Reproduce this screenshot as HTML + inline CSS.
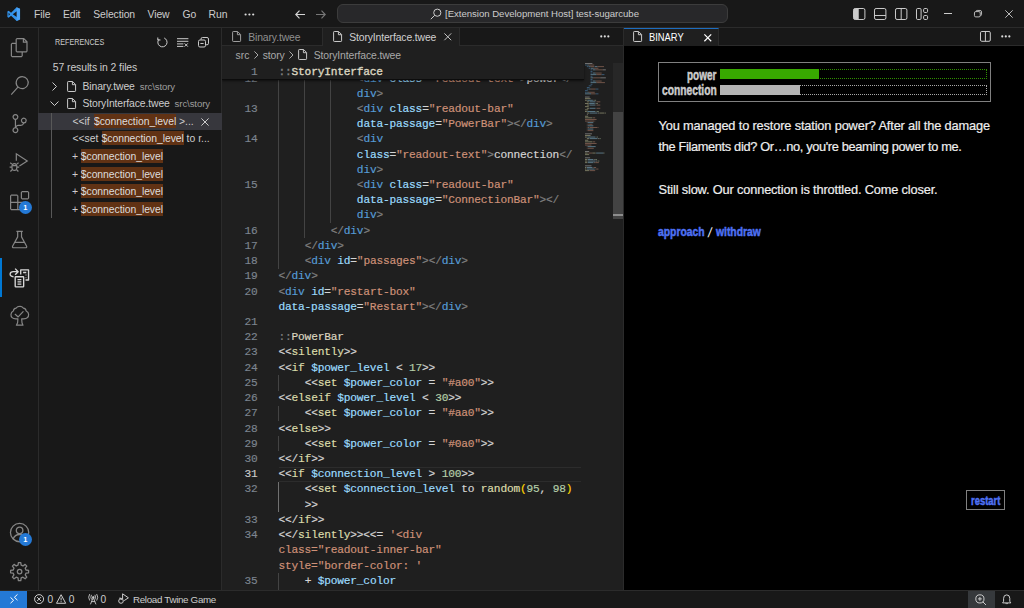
<!DOCTYPE html>
<html><head><meta charset="utf-8"><title>VS Code</title>
<style>
*{box-sizing:border-box;margin:0;padding:0}
html{background:#181818}
html,body{width:1024px;height:608px;overflow:hidden;background:#181818;font-family:"Liberation Sans",sans-serif;font-size:10.4px;color:#ccc}
.abs{position:absolute}
#title{position:absolute;left:0;top:0;width:1024px;height:28px;background:#181818;border-bottom:1px solid #2b2b2b}
#title .m{position:absolute;top:9px;letter-spacing:-.12px;margin-left:-.4px;font-size:10.4px;color:#ccc;line-height:12px;white-space:nowrap}
#cc{position:absolute;left:336.7px;top:4.3px;width:391.8px;height:19px;border:1px solid #3c3c3c;border-radius:6px;background:#28282a}
#cc span{letter-spacing:-.03px;position:absolute;left:107.4px;top:2.6px;font-size:9.6px;line-height:12px;color:#ccc;white-space:nowrap}
#act{position:absolute;left:0;top:28px;width:39px;height:562px;background:#181818;border-right:1px solid #2b2b2b}
#side{position:absolute;left:39px;top:28px;width:183px;height:562px;background:#181818;border-right:1px solid #2b2b2b}
#ed{position:absolute;left:222px;top:28px;width:402px;height:562px;background:#1f1f1f;overflow:hidden;border-right:1px solid #2b2b2b}
#pane{position:absolute;left:624px;top:28px;width:400px;height:562px;background:#000}
#status{position:absolute;left:0;top:590px;width:1024px;height:18px;background:#181818;border-top:1px solid #2b2b2b}
svg{position:absolute;overflow:visible}
.row{position:absolute;left:0;width:183px;height:17.6px;line-height:17.6px;white-space:nowrap;font-size:10.4px;color:#ccc}
.row span{position:absolute;top:0}
.hl{background:#613214;color:#ddd}
.dim{color:#9d9d9d;font-size:9.6px}
.tabs{position:absolute;left:0;top:0;height:17.6px;width:100%;background:#181818;border-bottom:1px solid #2b2b2b}
.tab{position:absolute;top:0;height:17.6px;border-right:1px solid #2b2b2b;font-size:10.4px;line-height:17px;white-space:nowrap}
.tab span{position:absolute;top:1px}
.code{position:absolute;left:0;margin-top:.5px;margin-left:-.7px;-webkit-text-stroke:.18px currentColor;font-family:"Liberation Mono",monospace;font-size:11.2px;letter-spacing:-.19px;line-height:15.22px;height:15.22px;white-space:pre;color:#d4d4d4}
.ln{position:absolute;left:0;margin-top:.5px;width:35.6px;text-align:right;font-family:"Liberation Mono",monospace;font-size:11.2px;letter-spacing:-.19px;line-height:15.22px;color:#7d8590;-webkit-text-stroke:.15px currentColor}
.cd{position:absolute;font-weight:bold;-webkit-text-stroke:.5px currentColor;white-space:nowrap;transform-origin:0 0;display:inline-block}
.pt{position:absolute;left:34.5px;font-size:12.8px;line-height:21.2px;color:#eee;white-space:nowrap;-webkit-text-stroke:.2px currentColor}
.sb{position:absolute;top:0;font-size:10.2px;line-height:17.5px;color:#ccc;white-space:nowrap}
.g{color:#808080}.b{color:#569cd6}.a{color:#9cdcfe}.s{color:#ce9178}.y{color:#dcdcaa}.n{color:#b5cea8}.p{color:#ffd700}.w{color:#d4d4d4}.t{color:#dcd6c0}
</style></head><body>
<div id="title">
<svg style="left:7.2px;top:6.6px" width="13.6" height="14.4" viewBox="0 0 100 100" preserveAspectRatio="none"><path fill="#3292ea" d="M71 2 L96 13 V87 L71 98 L30 60 L12 74 L3 69 V31 L12 26 L30 40 Z M72 30 L42 50 L72 70 Z M12 40 V60 L22 50 Z"/><path fill="#58adff" d="M71 2 L96 13 V87 L71 98 Z" opacity=".6"/></svg>
<span class="m" style="left:34.5px">File</span>
<span class="m" style="left:63.3px">Edit</span>
<span class="m" style="left:93.7px">Selection</span>
<span class="m" style="left:148px">View</span>
<span class="m" style="left:183px">Go</span>
<span class="m" style="left:209px">Run</span>
<svg style="left:243.8px;top:12.6px" width="10.8" height="3" viewBox="0 0 10 3"><circle cx="1.2" cy="1.5" r="1.1" fill="#ddd"/><circle cx="5" cy="1.5" r="1.1" fill="#ddd"/><circle cx="8.8" cy="1.5" r="1.1" fill="#ddd"/></svg>
<svg style="left:295px;top:9.5px" width="10" height="9" viewBox="0 0 10 9" fill="none" stroke="#d4d4d4" stroke-width="1.15"><path d="M4.5 .7 L.8 4.5 L4.5 8.3 M.8 4.5 H10"/></svg>
<svg style="left:316px;top:9.5px" width="10" height="9" viewBox="0 0 10 9" fill="none" stroke="#777" stroke-width="1.15"><path d="M5.5 .7 L9.2 4.5 L5.5 8.3 M9.2 4.5 H0"/></svg>
<div id="cc"><svg style="left:92.3px;top:3px" width="12" height="12" viewBox="0 0 12 12" fill="none" stroke="#ccc" stroke-width="1"><circle cx="7.3" cy="4.7" r="3.6"/><path d="M4.7 7.3 L.8 11.2"/></svg><span>[Extension Development Host] test-sugarcube</span></div>
<svg style="left:853px;top:7.5px" width="12.4" height="12" viewBox="0 0 12.4 12" fill="none" stroke="#ccc" stroke-width="1"><rect x=".5" y=".5" width="11.4" height="11" rx="1.6"/><path d="M1 1 H5.2 V11 H1 Z" fill="#ccc" stroke="none"/><path d="M5.2 .5 V11.5"/></svg>
<svg style="left:873.8px;top:7.5px" width="12.4" height="12" viewBox="0 0 12.4 12" fill="none" stroke="#ccc" stroke-width="1"><rect x=".5" y=".5" width="11.4" height="11" rx="1.6"/><path d="M.5 7.5 H11.9"/></svg>
<svg style="left:894.8px;top:7.5px" width="12.4" height="12" viewBox="0 0 12.4 12" fill="none" stroke="#ccc" stroke-width="1"><rect x=".5" y=".5" width="11.4" height="11" rx="1.6"/><path d="M6.2 .5 V11.5"/></svg>
<svg style="left:916px;top:7.5px" width="12.4" height="12" viewBox="0 0 12.4 12" fill="none" stroke="#ccc" stroke-width="1"><rect x=".5" y=".5" width="4.6" height="11" rx="1.2"/><rect x="7.6" y=".5" width="4" height="4" rx="1.2"/><rect x="7.6" y="7.5" width="4" height="4" rx="1.2"/></svg>
<svg style="left:944px;top:13px" width="8" height="1" viewBox="0 0 8 1"><rect width="8" height="1" fill="#ccc"/></svg>
<svg style="left:974px;top:10.3px" width="8" height="7.4" viewBox="0 0 8 7.4" fill="none" stroke="#ccc" stroke-width=".9"><rect x=".45" y="1.6" width="5.8" height="5.3" rx="1.3"/><path d="M2 1.4 Q2.2 .45 3.2 .45 H6 Q7.55 .45 7.55 2 V4.6 Q7.55 5.5 6.5 5.7"/></svg>
<svg style="left:1005px;top:9.8px" width="8" height="8" viewBox="0 0 8 8" fill="none" stroke="#ccc" stroke-width=".9"><path d="M.3 .3 L7.7 7.7 M7.7 .3 L.3 7.7"/></svg>
</div>
<div id="act">
<svg style="left:9.6px;top:9.6px" width="19.2" height="19.2" viewBox="0 0 24 24" fill="#868686"><path d="M17.5 0h-9L7 1.5V6H2.5L1 7.5v15.07L2.5 24h12.07L16 22.57V18h4.7l1.3-1.43V4.5L17.5 0zm0 2.12l2.38 2.38H17.5V2.12zm-3 20.38h-12v-15H7v9.07L8.5 18h6v4.5zm6-6h-12v-15H16V6h4.5v10.5z"/></svg>
<svg style="left:9.6px;top:48.0px" width="19.2" height="19.2" viewBox="0 0 24 24" fill="#868686"><path d="M15.25 0a8.25 8.25 0 0 0-6.18 13.72L1 22.88l1.12 1 8.05-9.12A8.251 8.251 0 1 0 15.25.01V0zm0 15a6.75 6.75 0 1 1 0-13.5 6.75 6.75 0 0 1 0 13.5z"/></svg>
<svg style="left:9.6px;top:86.4px" width="19.2" height="19.2" viewBox="0 0 24 24" fill="#868686"><path d="M21.007 8.222A3.738 3.738 0 0 0 15.045 5.2a3.737 3.737 0 0 0 1.156 6.583 2.988 2.988 0 0 1-2.668 1.67h-2.99a4.456 4.456 0 0 0-2.989 1.165V7.4a3.737 3.737 0 1 0-1.494 0v9.117a3.776 3.776 0 1 0 1.816.099 2.99 2.99 0 0 1 2.668-1.667h2.99a4.484 4.484 0 0 0 4.223-3.039 3.736 3.736 0 0 0 3.25-3.687zM4.565 3.738a2.242 2.242 0 1 1 4.484 0 2.242 2.242 0 0 1-4.484 0zm4.484 16.441a2.242 2.242 0 1 1-4.484 0 2.242 2.242 0 0 1 4.484 0zm8.221-9.715a2.242 2.242 0 1 1 0-4.485 2.242 2.242 0 0 1 0 4.485z"/></svg>
<svg style="left:9.6px;top:124.8px" width="19.2" height="19.2" viewBox="0 0 24 24" fill="#868686"><g fill="none" stroke="#868686" stroke-width="1.5"><path d="M7.9 9.6 V1 L21.6 10 L11.8 16.4"/><g transform="translate(-1.3 .7)"><ellipse cx="6.8" cy="16.8" rx="3.1" ry="4.3"/><path d="M3.8 13.2 L1.6 11.4 M9.8 13.2 L12 11.4 M3.6 17 H.8 M10 17 H12.8 M4 20.2 L1.8 22.4 M9.6 20.2 L11.8 22.4 M4 15 H9.6"/></g></g></svg>
<svg style="left:9.6px;top:163.2px" width="19.2" height="19.2" viewBox="0 0 24 24" fill="#868686"><path d="M13.5 1.5L15 0h7.5L24 1.5V9l-1.5 1.5H15L13.5 9V1.5zm1.5 0V9h7.5V1.5H15zM0 15V6l1.5-1.5H9L10.5 6v7.5H18l1.5 1.5v7.5L18 24H1.5L0 22.5V15zm9-1.5V6H1.5v7.5H9zM9 15H1.5v7.5H9V15zm1.5 7.5H18V15h-7.5v7.5z"/></svg>
<svg style="left:9.6px;top:201.6px" width="19.2" height="19.2" viewBox="0 0 24 24" fill="#868686"><g fill="none" stroke="#868686" stroke-width="1.5" stroke-linejoin="round"><path d="M8 1.8 H16 M9.6 1.8 V8.6 L3.2 20.4 Q2.6 22.2 4.6 22.2 H19.4 Q21.4 22.2 20.8 20.4 L14.4 8.6 V1.8 M6 15.4 H18"/></g></svg>
<svg style="left:9.6px;top:240.0px" width="19.2" height="19.2" viewBox="0 0 24 24" fill="#d7d7d7"><g fill="none" stroke="#d7d7d7" stroke-width="1.7" stroke-linejoin="round"><path d="M13.4 8 V2.4 H23.2 V15 H19.4 M16.4 5.6 H20.4 M19.6 8.8 H20.4 M19.6 12 H20.4"/><rect x="6.5" y="11" width="10.6" height="12.6" rx=".8" fill="#181818"/><path d="M9.4 14.6 H14.2 M9.4 17.4 H14.2 M9.4 20.2 H14.2"/><path d="M4.4 11 Q-.2 10.4 .2 7.4 Q.6 4.6 4 4.6 H9.4 M6.4 .8 L10.2 4.6 L6.4 8.4"/></g></svg>
<svg style="left:9.6px;top:278.4px" width="19.2" height="19.2" viewBox="0 0 24 24" fill="#868686"><g fill="none" stroke="#868686" stroke-width="1.5" stroke-linejoin="round" stroke-linecap="round"><path d="M9.9 16 H7.4 Q1 15.8 1.2 10.6 Q1.3 7.4 4.2 6.2 Q4.6 3 7.6 2.6 Q9.6 .4 12.2 .6 Q14.8 .4 16.8 2.6 Q19.8 3 20.2 6.2 Q23.2 7.4 23.3 10.6 Q23.4 15.8 17 16 H14.6 M9.9 16 L9.5 21 L8 24 H16.2 L15 21 L14.6 16"/><path d="M6.5 10.4 L10.2 13.7 L16.4 7.1"/></g></svg>
<div class="abs" style="left:18.8px;top:173.2px;width:13px;height:13px;border-radius:7px;background:#2479d6;color:#fff;font-size:7.4px;font-weight:bold;line-height:13px;text-align:center">1</div>
<div class="abs" style="left:0;top:230.4px;width:2px;height:38.4px;background:#0078d4"></div>
<svg style="left:9.6px;top:495.2px" width="19.2" height="19.2" viewBox="0 0 24 24" fill="none" stroke="#868686" stroke-width="1.5" transform="scale(1.08)"><circle cx="12" cy="12" r="10.6"/><circle cx="12" cy="9.4" r="3.8"/><path d="M4.6 19.4 Q6.4 14.2 12 14.2 Q17.6 14.2 19.4 19.4"/></svg>
<div class="abs" style="left:18.8px;top:505.2px;width:13px;height:13px;border-radius:7px;background:#2479d6;color:#fff;font-size:7.4px;font-weight:bold;line-height:13px;text-align:center">1</div>
<svg style="left:9.6px;top:533.6px" width="19.2" height="19.2" viewBox="0 0 24 24" fill="none" stroke="#868686" stroke-width="1.5" stroke-linejoin="round" transform="scale(1.08)"><path d="M19.38 10.17 L22.41 10.62 L22.41 13.38 L19.38 13.83 L18.51 15.92 L20.34 18.38 L18.38 20.34 L15.92 18.51 L13.83 19.38 L13.38 22.41 L10.62 22.41 L10.17 19.38 L8.08 18.51 L5.62 20.34 L3.66 18.38 L5.49 15.92 L4.62 13.83 L1.59 13.38 L1.59 10.62 L4.62 10.17 L5.49 8.08 L3.66 5.62 L5.62 3.66 L8.08 5.49 L10.17 4.62 L10.62 1.59 L13.38 1.59 L13.83 4.62 L15.92 5.49 L18.38 3.66 L20.34 5.62 L18.51 8.08 Z"/><circle cx="12" cy="12" r="2.6"/></svg>
</div>
<div id="side">
<span class="abs" style="left:15.7px;top:8px;font-size:9.4px;line-height:12px;color:#ccc;white-space:nowrap;transform:scaleX(.768);transform-origin:0 0">REFERENCES</span>
<svg style="left:117.6px;top:9px" width="10.6" height="10.6" viewBox="0 0 10.6 10.6" fill="none" stroke="#ccc" stroke-width="1"><path d="M7.2 1 A4.6 4.6 0 1 1 1.9 2.3 M.8 .5 V3 H3.5" /></svg>
<svg style="left:138px;top:10px" width="11.6" height="9" viewBox="0 0 11.6 9" fill="none" stroke="#ccc" stroke-width="1"><path d="M0 .7 H11.4 M0 3.3 H11.4 M0 5.9 H6.4 M0 8.4 H6.4 M7.6 5.4 L10.8 8.6 M10.8 5.4 L7.6 8.6"/></svg>
<svg style="left:159px;top:9px" width="11" height="10.6" viewBox="0 0 11 10.6" fill="none" stroke="#ccc" stroke-width="1"><rect x=".5" y="3" width="7" height="7" rx="1.4"/><path d="M2.4 6.5 H5.6 M3 2.8 V2 Q3 .5 4.5 .5 H9 Q10.5 .5 10.5 2 V6.4 Q10.5 7.8 9 7.8 H7.8"/></svg>
<div class="row" style="top:31.9px"><span style="left:13.8px;top:-1.3px;letter-spacing:-.08px">57 results in 2 files</span></div>
<div class="row" style="top:49.5px"><svg style="left:13px;top:4.3px" width="5" height="9" viewBox="0 0 5 9" fill="none" stroke="#ccc" stroke-width="1"><path d="M.5 .5 L4.5 4.5 L.5 8.5"/></svg><svg style="left:27.7px;top:3.3px" width="9.2" height="11" viewBox="0 0 9.2 11" fill="none" stroke="#ccc" stroke-width="1" stroke-linejoin="round"><path d="M.6 1.2 Q.6 .5 1.3 .5 H5.6 L8.6 3.5 V9.8 Q8.6 10.5 7.9 10.5 H1.3 Q.6 10.5 .6 9.8 Z M5.4 .7 V3.7 H8.4"/></svg><span style="left:43.5px;letter-spacing:-.12px">Binary.twee</span><span class="dim" style="left:100.7px;letter-spacing:-.1px">src\story</span></div>
<div class="row" style="top:67.1px"><svg style="left:11px;top:6.3px" width="9" height="5" viewBox="0 0 9 5" fill="none" stroke="#ccc" stroke-width="1"><path d="M.5 .5 L4.5 4.5 L8.5 .5"/></svg><svg style="left:27.7px;top:3.3px" width="9.2" height="11" viewBox="0 0 9.2 11" fill="none" stroke="#ccc" stroke-width="1" stroke-linejoin="round"><path d="M.6 1.2 Q.6 .5 1.3 .5 H5.6 L8.6 3.5 V9.8 Q8.6 10.5 7.9 10.5 H1.3 Q.6 10.5 .6 9.8 Z M5.4 .7 V3.7 H8.4"/></svg><span style="left:43.5px;letter-spacing:-.12px">StoryInterface.twee</span><span class="dim" style="left:135.6px;letter-spacing:-.1px">src\story</span></div>
<div class="row" style="top:84.7px;background:#37373d;box-shadow:-1px 0 0 #37373d"><span style="left:33.4px">&lt;&lt;if</span><span class="hl" style="left:55px;top:1px;height:14.2px;line-height:15.4px;letter-spacing:-.06px">$connection_level</span><span style="left:140px">&gt;...</span><svg style="left:161.5px;top:5px" width="8" height="8" viewBox="0 0 8 8" fill="none" stroke="#ccc" stroke-width="1"><path d="M.4 .4 L7.6 7.6 M7.6 .4 L.4 7.6"/></svg></div>
<div class="row" style="top:102.30000000000001px"><span style="left:33.4px">&lt;&lt;set</span><span class="hl" style="left:62.6px;top:1px;height:14.2px;line-height:15.4px;letter-spacing:-.06px">$connection_level</span><span style="left:147.6px">to r...</span></div>
<div class="row" style="top:119.9px"><span style="left:33px">+</span><span class="hl" style="left:41.8px;top:1px;height:14.2px;line-height:15.4px;letter-spacing:-.06px">$connection_level</span></div>
<div class="row" style="top:137.5px"><span style="left:33px">+</span><span class="hl" style="left:41.8px;top:1px;height:14.2px;line-height:15.4px;letter-spacing:-.06px">$connection_level</span></div>
<div class="row" style="top:155.10000000000002px"><span style="left:33px">+</span><span class="hl" style="left:41.8px;top:1px;height:14.2px;line-height:15.4px;letter-spacing:-.06px">$connection_level</span></div>
<div class="row" style="top:172.70000000000002px"><span style="left:33px">+</span><span class="hl" style="left:41.8px;top:1px;height:14.2px;line-height:15.4px;letter-spacing:-.06px">$connection_level</span></div>
<div class="abs" style="left:12.3px;top:84.7px;width:1px;height:105.6px;background:#585858"></div>
</div>
<div id="ed">
<div class="abs" style="left:57px;top:438.72px;width:302px;height:15.22px;border-top:1px solid #2c2c2c;border-bottom:1px solid #2c2c2c"></div>
<div class="abs" style="left:56.20px;top:43.00px;width:1px;height:197.86px;background:#434343"></div>
<div class="abs" style="left:82.32px;top:43.00px;width:1px;height:167.42px;background:#434343"></div>
<div class="abs" style="left:108.44px;top:43.00px;width:1px;height:152.20px;background:#434343"></div>
<div class="abs" style="left:56.20px;top:347.40px;width:1px;height:15.22px;background:#434343"></div>
<div class="abs" style="left:56.20px;top:377.84px;width:1px;height:15.22px;background:#434343"></div>
<div class="abs" style="left:56.20px;top:408.28px;width:1px;height:15.22px;background:#434343"></div>
<div class="abs" style="left:56.20px;top:453.94px;width:1px;height:30.44px;background:#707070"></div>
<div class="abs" style="left:56.20px;top:545.26px;width:1px;height:30.44px;background:#434343"></div>
<div class="ln" style="top:43.00px;color:#7d8590">12</div><div class="code" style="top:43.00px;left:135.56px"><span class="g">&lt;</span><span class="b">div</span> <span class="a">class</span><span class="w">=</span><span class="s">"readout-text"</span><span class="g">&gt;</span>power<span class="g">&lt;/</span></div>
<div class="code" style="top:58.22px;left:135.56px"><span class="b">div</span><span class="g">&gt;</span></div>
<div class="ln" style="top:73.44px;color:#7d8590">13</div><div class="code" style="top:73.44px;left:135.56px"><span class="g">&lt;</span><span class="b">div</span> <span class="a">class</span><span class="w">=</span><span class="s">"readout-bar"</span></div>
<div class="code" style="top:88.66px;left:135.56px"><span class="a">data-passage</span><span class="w">=</span><span class="s">"PowerBar"</span><span class="g">&gt;&lt;/</span><span class="b">div</span><span class="g">&gt;</span></div>
<div class="ln" style="top:103.88px;color:#7d8590">14</div><div class="code" style="top:103.88px;left:135.56px"><span class="g">&lt;</span><span class="b">div</span></div>
<div class="code" style="top:119.10px;left:135.56px"><span class="a">class</span><span class="w">=</span><span class="s">"readout-text"</span><span class="g">&gt;</span>connection<span class="g">&lt;/</span></div>
<div class="code" style="top:134.32px;left:135.56px"><span class="b">div</span><span class="g">&gt;</span></div>
<div class="ln" style="top:149.54px;color:#7d8590">15</div><div class="code" style="top:149.54px;left:135.56px"><span class="g">&lt;</span><span class="b">div</span> <span class="a">class</span><span class="w">=</span><span class="s">"readout-bar"</span></div>
<div class="code" style="top:164.76px;left:135.56px"><span class="a">data-passage</span><span class="w">=</span><span class="s">"ConnectionBar"</span><span class="g">&gt;&lt;/</span></div>
<div class="code" style="top:179.98px;left:135.56px"><span class="b">div</span><span class="g">&gt;</span></div>
<div class="ln" style="top:195.20px;color:#7d8590">16</div><div class="code" style="top:195.20px;left:109.44px"><span class="g">&lt;/</span><span class="b">div</span><span class="g">&gt;</span></div>
<div class="ln" style="top:210.42px;color:#7d8590">17</div><div class="code" style="top:210.42px;left:83.32px"><span class="g">&lt;/</span><span class="b">div</span><span class="g">&gt;</span></div>
<div class="ln" style="top:225.64px;color:#7d8590">18</div><div class="code" style="top:225.64px;left:83.32px"><span class="g">&lt;</span><span class="b">div</span> <span class="a">id</span><span class="w">=</span><span class="s">"passages"</span><span class="g">&gt;&lt;/</span><span class="b">div</span><span class="g">&gt;</span></div>
<div class="ln" style="top:240.86px;color:#7d8590">19</div><div class="code" style="top:240.86px;left:57.20px"><span class="g">&lt;/</span><span class="b">div</span><span class="g">&gt;</span></div>
<div class="ln" style="top:256.08px;color:#7d8590">20</div><div class="code" style="top:256.08px;left:57.20px"><span class="g">&lt;</span><span class="b">div</span> <span class="a">id</span><span class="w">=</span><span class="s">"restart-box"</span></div>
<div class="code" style="top:271.30px;left:57.20px"><span class="a">data-passage</span><span class="w">=</span><span class="s">"Restart"</span><span class="g">&gt;&lt;/</span><span class="b">div</span><span class="g">&gt;</span></div>
<div class="ln" style="top:286.52px;color:#7d8590">21</div><div class="code" style="top:286.52px;left:57.20px"></div>
<div class="ln" style="top:301.74px;color:#7d8590">22</div><div class="code" style="top:301.74px;left:57.20px"><span class="g">::</span><span class="t">PowerBar</span></div>
<div class="ln" style="top:316.96px;color:#7d8590">23</div><div class="code" style="top:316.96px;left:57.20px">&lt;&lt;<span class="y">silently</span>&gt;&gt;</div>
<div class="ln" style="top:332.18px;color:#7d8590">24</div><div class="code" style="top:332.18px;left:57.20px">&lt;&lt;<span class="y">if</span> <span class="a">$power_level</span> &lt; <span class="n">17</span>&gt;&gt;</div>
<div class="ln" style="top:347.40px;color:#7d8590">25</div><div class="code" style="top:347.40px;left:83.32px">&lt;&lt;<span class="y">set</span> <span class="a">$power_color</span> = <span class="s">"#a00"</span>&gt;&gt;</div>
<div class="ln" style="top:362.62px;color:#7d8590">26</div><div class="code" style="top:362.62px;left:57.20px">&lt;&lt;<span class="y">elseif</span> <span class="a">$power_level</span> &lt; <span class="n">30</span>&gt;&gt;</div>
<div class="ln" style="top:377.84px;color:#7d8590">27</div><div class="code" style="top:377.84px;left:83.32px">&lt;&lt;<span class="y">set</span> <span class="a">$power_color</span> = <span class="s">"#aa0"</span>&gt;&gt;</div>
<div class="ln" style="top:393.06px;color:#7d8590">28</div><div class="code" style="top:393.06px;left:57.20px">&lt;&lt;<span class="y">else</span>&gt;&gt;</div>
<div class="ln" style="top:408.28px;color:#7d8590">29</div><div class="code" style="top:408.28px;left:83.32px">&lt;&lt;<span class="y">set</span> <span class="a">$power_color</span> = <span class="s">"#0a0"</span>&gt;&gt;</div>
<div class="ln" style="top:423.50px;color:#7d8590">30</div><div class="code" style="top:423.50px;left:57.20px">&lt;&lt;/<span class="y">if</span>&gt;&gt;</div>
<div class="ln" style="top:438.72px;color:#ccc">31</div><div class="code" style="top:438.72px;left:57.20px">&lt;&lt;<span class="y">if</span> <span class="a">$connection_level</span> &gt; <span class="n">100</span>&gt;&gt;</div>
<div class="ln" style="top:453.94px;color:#7d8590">32</div><div class="code" style="top:453.94px;left:83.32px">&lt;&lt;<span class="y">set</span> <span class="a">$connection_level</span> to <span class="y">random</span><span class="p">(</span><span class="n">95</span>, <span class="n">98</span><span class="p">)</span></div>
<div class="code" style="top:469.16px;left:83.32px">&gt;&gt;</div>
<div class="ln" style="top:484.38px;color:#7d8590">33</div><div class="code" style="top:484.38px;left:57.20px">&lt;&lt;/<span class="y">if</span>&gt;&gt;</div>
<div class="ln" style="top:499.60px;color:#7d8590">34</div><div class="code" style="top:499.60px;left:57.20px">&lt;&lt;/<span class="y">silently</span>&gt;&gt;&lt;&lt;= <span class="s">'&lt;div</span></div>
<div class="code" style="top:514.82px;left:57.20px"><span class="s">class="readout-inner-bar"</span></div>
<div class="code" style="top:530.04px;left:57.20px"><span class="s">style="border-color: '</span></div>
<div class="ln" style="top:545.26px;color:#7d8590">35</div><div class="code" style="top:545.26px;left:83.32px">+ <span class="a">$power_color</span></div>
<div class="code" style="top:560.48px;left:83.32px"></div>
<svg style="left:362.5px;top:35.3px;opacity:.5" preserveAspectRatio="none" width="21.5" height="108.8" viewBox="0 0 26 108.8"><rect x="0.00" y="0.00" width="8.96" height=".9" fill="#d4d4d4"/><rect x="0.00" y="1.60" width="2.24" height=".9" fill="#569cd6"/><rect x="2.80" y="1.60" width="1.68" height=".9" fill="#9cdcfe"/><rect x="4.48" y="1.60" width="6.72" height=".9" fill="#ce9178"/><rect x="2.24" y="3.20" width="2.24" height=".9" fill="#569cd6"/><rect x="5.04" y="3.20" width="1.68" height=".9" fill="#9cdcfe"/><rect x="6.72" y="3.20" width="4.48" height=".9" fill="#ce9178"/><rect x="11.76" y="3.20" width="3.36" height=".9" fill="#9cdcfe"/><rect x="15.12" y="3.20" width="7.84" height=".9" fill="#ce9178"/><rect x="4.48" y="4.80" width="2.24" height=".9" fill="#569cd6"/><rect x="7.28" y="4.80" width="3.36" height=".9" fill="#9cdcfe"/><rect x="10.64" y="4.80" width="5.60" height=".9" fill="#ce9178"/><rect x="6.72" y="6.40" width="2.24" height=".9" fill="#569cd6"/><rect x="9.52" y="6.40" width="3.36" height=".9" fill="#9cdcfe"/><rect x="12.88" y="6.40" width="8.40" height=".9" fill="#ce9178"/><rect x="21.28" y="6.40" width="3.92" height=".9" fill="#d4d4d4"/><rect x="6.72" y="8.00" width="2.24" height=".9" fill="#569cd6"/><rect x="6.72" y="9.60" width="2.24" height=".9" fill="#569cd6"/><rect x="9.52" y="9.60" width="3.36" height=".9" fill="#9cdcfe"/><rect x="12.88" y="9.60" width="7.28" height=".9" fill="#ce9178"/><rect x="6.72" y="11.20" width="7.28" height=".9" fill="#9cdcfe"/><rect x="14.00" y="11.20" width="6.16" height=".9" fill="#ce9178"/><rect x="20.16" y="11.20" width="3.36" height=".9" fill="#569cd6"/><rect x="6.72" y="12.80" width="2.24" height=".9" fill="#569cd6"/><rect x="6.72" y="14.40" width="3.36" height=".9" fill="#9cdcfe"/><rect x="10.08" y="14.40" width="8.40" height=".9" fill="#ce9178"/><rect x="18.48" y="14.40" width="6.72" height=".9" fill="#d4d4d4"/><rect x="6.72" y="16.00" width="2.24" height=".9" fill="#569cd6"/><rect x="6.72" y="17.60" width="2.24" height=".9" fill="#569cd6"/><rect x="9.52" y="17.60" width="3.36" height=".9" fill="#9cdcfe"/><rect x="12.88" y="17.60" width="7.28" height=".9" fill="#ce9178"/><rect x="6.72" y="19.20" width="7.28" height=".9" fill="#9cdcfe"/><rect x="14.00" y="19.20" width="10.08" height=".9" fill="#ce9178"/><rect x="6.72" y="20.80" width="2.24" height=".9" fill="#569cd6"/><rect x="4.48" y="22.40" width="3.36" height=".9" fill="#569cd6"/><rect x="2.24" y="24.00" width="3.36" height=".9" fill="#569cd6"/><rect x="2.24" y="25.60" width="2.24" height=".9" fill="#569cd6"/><rect x="5.04" y="25.60" width="1.68" height=".9" fill="#9cdcfe"/><rect x="6.72" y="25.60" width="6.16" height=".9" fill="#ce9178"/><rect x="12.88" y="25.60" width="3.36" height=".9" fill="#569cd6"/><rect x="0.00" y="27.20" width="3.36" height=".9" fill="#569cd6"/><rect x="0.00" y="28.80" width="2.24" height=".9" fill="#569cd6"/><rect x="2.80" y="28.80" width="1.68" height=".9" fill="#9cdcfe"/><rect x="4.48" y="28.80" width="7.28" height=".9" fill="#ce9178"/><rect x="0.00" y="30.40" width="7.28" height=".9" fill="#9cdcfe"/><rect x="7.28" y="30.40" width="5.60" height=".9" fill="#ce9178"/><rect x="12.88" y="30.40" width="3.36" height=".9" fill="#569cd6"/><rect x="0.00" y="33.60" width="5.60" height=".9" fill="#d4d4d4"/><rect x="0.00" y="35.20" width="6.72" height=".9" fill="#dcdcaa"/><rect x="0.00" y="36.80" width="2.24" height=".9" fill="#dcdcaa"/><rect x="2.80" y="36.80" width="6.72" height=".9" fill="#9cdcfe"/><rect x="10.08" y="36.80" width="0.56" height=".9" fill="#d4d4d4"/><rect x="11.20" y="36.80" width="2.24" height=".9" fill="#b5cea8"/><rect x="2.24" y="38.40" width="2.80" height=".9" fill="#dcdcaa"/><rect x="5.60" y="38.40" width="6.72" height=".9" fill="#9cdcfe"/><rect x="12.88" y="38.40" width="0.56" height=".9" fill="#d4d4d4"/><rect x="14.00" y="38.40" width="4.48" height=".9" fill="#ce9178"/><rect x="0.00" y="40.00" width="4.48" height=".9" fill="#dcdcaa"/><rect x="5.04" y="40.00" width="6.72" height=".9" fill="#9cdcfe"/><rect x="12.32" y="40.00" width="0.56" height=".9" fill="#d4d4d4"/><rect x="13.44" y="40.00" width="2.24" height=".9" fill="#b5cea8"/><rect x="2.24" y="41.60" width="2.80" height=".9" fill="#dcdcaa"/><rect x="5.60" y="41.60" width="6.72" height=".9" fill="#9cdcfe"/><rect x="12.88" y="41.60" width="0.56" height=".9" fill="#d4d4d4"/><rect x="14.00" y="41.60" width="4.48" height=".9" fill="#ce9178"/><rect x="0.00" y="43.20" width="4.48" height=".9" fill="#dcdcaa"/><rect x="2.24" y="44.80" width="2.80" height=".9" fill="#dcdcaa"/><rect x="5.60" y="44.80" width="6.72" height=".9" fill="#9cdcfe"/><rect x="12.88" y="44.80" width="0.56" height=".9" fill="#d4d4d4"/><rect x="14.00" y="44.80" width="4.48" height=".9" fill="#ce9178"/><rect x="0.00" y="46.40" width="3.92" height=".9" fill="#dcdcaa"/><rect x="0.00" y="48.00" width="2.24" height=".9" fill="#dcdcaa"/><rect x="2.80" y="48.00" width="9.52" height=".9" fill="#9cdcfe"/><rect x="12.88" y="48.00" width="0.56" height=".9" fill="#d4d4d4"/><rect x="14.00" y="48.00" width="2.80" height=".9" fill="#b5cea8"/><rect x="2.24" y="49.60" width="2.80" height=".9" fill="#dcdcaa"/><rect x="5.60" y="49.60" width="9.52" height=".9" fill="#9cdcfe"/><rect x="15.68" y="49.60" width="1.12" height=".9" fill="#d4d4d4"/><rect x="17.36" y="49.60" width="5.60" height=".9" fill="#dcdcaa"/><rect x="23.52" y="49.60" width="1.68" height=".9" fill="#dcdcaa"/><rect x="2.24" y="51.20" width="1.12" height=".9" fill="#d4d4d4"/><rect x="0.00" y="52.80" width="3.92" height=".9" fill="#dcdcaa"/><rect x="0.00" y="54.40" width="8.96" height=".9" fill="#dcdcaa"/><rect x="9.52" y="54.40" width="2.80" height=".9" fill="#ce9178"/><rect x="0.00" y="56.00" width="14.00" height=".9" fill="#ce9178"/><rect x="0.00" y="57.60" width="11.20" height=".9" fill="#ce9178"/><rect x="11.76" y="57.60" width="0.56" height=".9" fill="#ce9178"/><rect x="2.24" y="59.20" width="0.56" height=".9" fill="#d4d4d4"/><rect x="3.36" y="59.20" width="6.72" height=".9" fill="#9cdcfe"/><rect x="2.24" y="60.80" width="0.56" height=".9" fill="#ce9178"/><rect x="3.36" y="60.80" width="1.12" height=".9" fill="#ce9178"/><rect x="5.04" y="60.80" width="3.36" height=".9" fill="#ce9178"/><rect x="8.96" y="60.80" width="0.56" height=".9" fill="#ce9178"/><rect x="2.24" y="62.40" width="0.56" height=".9" fill="#d4d4d4"/><rect x="3.36" y="62.40" width="6.72" height=".9" fill="#9cdcfe"/><rect x="2.24" y="64.00" width="0.56" height=".9" fill="#ce9178"/><rect x="3.36" y="64.00" width="1.68" height=".9" fill="#ce9178"/><rect x="5.60" y="64.00" width="9.52" height=".9" fill="#ce9178"/><rect x="15.68" y="64.00" width="0.56" height=".9" fill="#ce9178"/><rect x="2.24" y="65.60" width="0.56" height=".9" fill="#d4d4d4"/><rect x="3.36" y="65.60" width="6.72" height=".9" fill="#9cdcfe"/><rect x="2.24" y="67.20" width="0.56" height=".9" fill="#ce9178"/><rect x="3.36" y="67.20" width="6.72" height=".9" fill="#ce9178"/><rect x="0.00" y="70.40" width="8.40" height=".9" fill="#d4d4d4"/><rect x="0.00" y="72.00" width="6.72" height=".9" fill="#dcdcaa"/><rect x="0.00" y="73.60" width="2.24" height=".9" fill="#dcdcaa"/><rect x="2.80" y="73.60" width="9.52" height=".9" fill="#9cdcfe"/><rect x="12.88" y="73.60" width="0.56" height=".9" fill="#d4d4d4"/><rect x="14.00" y="73.60" width="1.68" height=".9" fill="#b5cea8"/><rect x="2.24" y="75.20" width="2.80" height=".9" fill="#dcdcaa"/><rect x="5.60" y="75.20" width="9.52" height=".9" fill="#9cdcfe"/><rect x="15.68" y="75.20" width="1.12" height=".9" fill="#d4d4d4"/><rect x="17.36" y="75.20" width="1.68" height=".9" fill="#b5cea8"/><rect x="0.00" y="76.80" width="3.92" height=".9" fill="#dcdcaa"/><rect x="0.00" y="78.40" width="8.96" height=".9" fill="#dcdcaa"/><rect x="9.52" y="78.40" width="2.80" height=".9" fill="#ce9178"/><rect x="0.00" y="80.00" width="14.00" height=".9" fill="#ce9178"/><rect x="0.00" y="81.60" width="7.28" height=".9" fill="#ce9178"/><rect x="7.84" y="81.60" width="0.56" height=".9" fill="#ce9178"/><rect x="2.24" y="83.20" width="0.56" height=".9" fill="#d4d4d4"/><rect x="3.36" y="83.20" width="9.52" height=".9" fill="#9cdcfe"/><rect x="2.24" y="84.80" width="0.56" height=".9" fill="#ce9178"/><rect x="3.36" y="84.80" width="7.28" height=".9" fill="#ce9178"/><rect x="0.00" y="88.00" width="5.04" height=".9" fill="#d4d4d4"/><rect x="0.00" y="89.60" width="3.36" height=".9" fill="#dcdcaa"/><rect x="3.92" y="89.60" width="5.04" height=".9" fill="#ce9178"/><rect x="8.96" y="89.60" width="3.92" height=".9" fill="#dcdcaa"/><rect x="13.44" y="89.60" width="8.96" height=".9" fill="#9cdcfe"/><rect x="22.40" y="89.60" width="1.12" height=".9" fill="#dcdcaa"/><rect x="0.00" y="91.20" width="5.04" height=".9" fill="#dcdcaa"/><rect x="0.00" y="94.40" width="6.16" height=".9" fill="#d4d4d4"/><rect x="0.00" y="96.00" width="2.80" height=".9" fill="#dcdcaa"/><rect x="3.36" y="96.00" width="6.72" height=".9" fill="#9cdcfe"/><rect x="10.64" y="96.00" width="1.12" height=".9" fill="#d4d4d4"/><rect x="12.32" y="96.00" width="2.24" height=".9" fill="#b5cea8"/><rect x="0.00" y="97.60" width="2.80" height=".9" fill="#dcdcaa"/><rect x="3.36" y="97.60" width="9.52" height=".9" fill="#9cdcfe"/><rect x="13.44" y="97.60" width="1.12" height=".9" fill="#d4d4d4"/><rect x="15.12" y="97.60" width="2.24" height=".9" fill="#b5cea8"/><rect x="0.00" y="99.20" width="2.80" height=".9" fill="#dcdcaa"/><rect x="3.36" y="99.20" width="6.72" height=".9" fill="#9cdcfe"/><rect x="10.64" y="99.20" width="1.12" height=".9" fill="#d4d4d4"/><rect x="12.32" y="99.20" width="4.48" height=".9" fill="#ce9178"/><rect x="0.00" y="102.40" width="7.84" height=".9" fill="#d4d4d4"/><rect x="0.00" y="104.00" width="1.68" height=".9" fill="#dcdcaa"/><rect x="2.24" y="104.00" width="6.72" height=".9" fill="#9cdcfe"/><rect x="9.52" y="104.00" width="0.56" height=".9" fill="#d4d4d4"/><rect x="10.64" y="104.00" width="2.80" height=".9" fill="#ce9178"/><rect x="0.00" y="105.60" width="1.68" height=".9" fill="#dcdcaa"/><rect x="2.24" y="105.60" width="9.52" height=".9" fill="#9cdcfe"/><rect x="12.32" y="105.60" width="0.56" height=".9" fill="#d4d4d4"/><rect x="13.44" y="105.60" width="2.80" height=".9" fill="#ce9178"/><rect x="0.00" y="107.20" width="5.04" height=".9" fill="#dcdcaa"/><rect x="5.60" y="107.20" width="6.72" height=".9" fill="#ce9178"/></svg>
<div class="abs" style="left:390.7px;top:35px;width:10.8px;height:49px;background:#272727"></div><div class="abs" style="left:390.7px;top:84px;width:10.8px;height:106.5px;background:#434343"></div><div class="abs" style="left:390.7px;top:185.5px;width:10.8px;height:2px;background:#8c8c8c"></div>
<div class="abs" style="left:0;top:35px;width:362px;height:15.6px;background:#1f1f1f;box-shadow:0 1px 0 #0c0c0c,0 2px 2px rgba(0,0,0,.55)"><div class="ln" style="top:1px;color:#7d8590">1</div><div class="code" style="top:1px;left:57.2px;-webkit-text-stroke:.35px currentColor"><span class="g">::</span><span class="t">StoryInterface</span></div></div>
<div class="abs" style="left:0;top:17.6px;width:402px;height:17.6px;background:#1f1f1f;color:#a9a9a9;font-size:10.4px;line-height:20px;white-space:nowrap"><span class="abs" style="left:13.5px">src</span><svg style="left:31.5px;top:5.3px" width="4.5" height="8" viewBox="0 0 4.5 8" fill="none" stroke="#a9a9a9" stroke-width="1"><path d="M.4 .4 L4 4 L.4 7.6"/></svg><span class="abs" style="left:40.7px;letter-spacing:-.1px">story</span><svg style="left:67px;top:5.3px" width="4.5" height="8" viewBox="0 0 4.5 8" fill="none" stroke="#a9a9a9" stroke-width="1"><path d="M.4 .4 L4 4 L.4 7.6"/></svg><svg style="left:76px;top:3.6px" width="9.2" height="11" viewBox="0 0 9.2 11" fill="none" stroke="#c5c5c5" stroke-width="1" stroke-linejoin="round"><path d="M.6 1.2 Q.6 .5 1.3 .5 H5.6 L8.6 3.5 V9.8 Q8.6 10.5 7.9 10.5 H1.3 Q.6 10.5 .6 9.8 Z M5.4 .7 V3.7 H8.4"/></svg><span class="abs" style="left:91.7px;letter-spacing:-.12px">StoryInterface.twee</span></div>
<div class="tabs"><div class="tab" style="left:0;width:101px;color:#8f8f8f"><svg style="left:10px;top:3.3px" width="9.2" height="11" viewBox="0 0 9.2 11" fill="none" stroke="#a0a0a0" stroke-width="1" stroke-linejoin="round"><path d="M.6 1.2 Q.6 .5 1.3 .5 H5.6 L8.6 3.5 V9.8 Q8.6 10.5 7.9 10.5 H1.3 Q.6 10.5 .6 9.8 Z M5.4 .7 V3.7 H8.4"/></svg><span style="left:26.2px;letter-spacing:-.12px">Binary.twee</span></div><div class="tab" style="left:101px;width:137px;height:18px;background:#1f1f1f;color:#fff"><svg style="left:10px;top:3.3px" width="9.2" height="11" viewBox="0 0 9.2 11" fill="none" stroke="#ccc" stroke-width="1" stroke-linejoin="round"><path d="M.6 1.2 Q.6 .5 1.3 .5 H5.6 L8.6 3.5 V9.8 Q8.6 10.5 7.9 10.5 H1.3 Q.6 10.5 .6 9.8 Z M5.4 .7 V3.7 H8.4"/></svg><span style="left:26.2px;letter-spacing:-.13px;color:#d0d0d0">StoryInterface.twee</span><svg style="left:121px;top:5px" width="7.6" height="7.6" viewBox="0 0 8 8" fill="none" stroke="#ccc" stroke-width="1"><path d="M.4 .4 L7.6 7.6 M7.6 .4 L.4 7.6"/></svg></div><svg style="left:377px;top:7.4px" width="11.6" height="2.8" viewBox="0 0 10 3"><circle cx="1.2" cy="1.5" r="1.15" fill="#ddd"/><circle cx="5" cy="1.5" r="1.15" fill="#ddd"/><circle cx="8.8" cy="1.5" r="1.15" fill="#ddd"/></svg></div>
</div>
<div id="pane">
<div class="tabs"><div class="tab" style="left:0;width:95px;height:18px;background:#1f1f1f;border-top:1px solid #1d6dc0;color:#fff"><svg style="left:8.8px;top:2.4px" width="9.2" height="11" viewBox="0 0 9.2 11" fill="none" stroke="#ccc" stroke-width="1" stroke-linejoin="round"><path d="M.6 1.2 Q.6 .5 1.3 .5 H5.6 L8.6 3.5 V9.8 Q8.6 10.5 7.9 10.5 H1.3 Q.6 10.5 .6 9.8 Z M5.4 .7 V3.7 H8.4"/></svg><span style="left:25.3px;top:-.3px;transform:scaleX(.9);transform-origin:0 0">BINARY</span><svg style="left:80px;top:4.8px" width="7.6" height="7.6" viewBox="0 0 8 8" fill="none" stroke="#fff" stroke-width="1.25"><path d="M.4 .4 L7.6 7.6 M7.6 .4 L.4 7.6"/></svg></div><svg style="left:356px;top:3px" width="10.8" height="10.8" viewBox="0 0 10.8 10.8" fill="none" stroke="#ccc" stroke-width="1"><rect x=".5" y=".5" width="9.8" height="9.8" rx="1.3"/><path d="M5.4 .5 V10.3"/></svg><svg style="left:376px;top:7.4px" width="11.6" height="2.8" viewBox="0 0 10 3"><circle cx="1.2" cy="1.5" r="1.15" fill="#ddd"/><circle cx="5" cy="1.5" r="1.15" fill="#ddd"/><circle cx="8.8" cy="1.5" r="1.15" fill="#ddd"/></svg></div>
<div class="abs" style="left:34px;top:34px;width:333px;height:40px;border:1px solid #808080"></div>
<span class="cd" style="left:63.4px;top:39.93px;font-size:14.5px;line-height:14.5px;transform:scaleX(0.686);color:#ccc;width:43px;text-align:left">power</span>
<span class="cd" style="left:38.0px;top:55.03px;font-size:14.5px;line-height:14.5px;transform:scaleX(0.707);color:#ccc">connection</span>
<div class="abs" style="left:95.6px;top:41px;width:267.5px;height:9.8px;border:1px dotted #2f8f00"></div><div class="abs" style="left:95.6px;top:41px;width:99.4px;height:9.8px;background:#38a800"></div>
<div class="abs" style="left:95.6px;top:57.2px;width:267.5px;height:9.8px;border:1px dotted #a8a8a8"></div><div class="abs" style="left:95.6px;top:57.2px;width:80.1px;height:9.8px;background:#b4b4b4"></div>
<div class="pt" style="top:86.96px;letter-spacing:-0.153px">You managed to restore station power? After all the damage</div>
<div class="pt" style="top:108.16px;letter-spacing:-0.34px">the Filaments did? Or…no, you're beaming power to me.</div>
<div class="pt" style="top:150.56px;letter-spacing:-0.158px">Still slow. Our connection is throttled. Come closer.</div>
<span class="cd" style="left:34.1px;top:197.23px;font-size:13.2px;line-height:13.2px;transform:scaleX(.785);color:#4f72f5">approach</span>
<span class="abs" style="left:83.6px;top:198.66px;font-size:13.4px;line-height:12.8px;color:#eee;transform:skewX(-8deg)">/</span>
<span class="cd" style="left:91.9px;top:197.23px;font-size:13.2px;line-height:13.2px;transform:scaleX(.783);color:#4f72f5">withdraw</span>
<div class="abs" style="left:342px;top:462px;width:38.8px;height:20px;border:1px solid #808080"></div>
<span class="cd" style="left:346.8px;top:467.2px;font-size:12.9px;line-height:12.9px;transform:scaleX(0.73);color:#4f72f5">restart</span>
</div>
<div id="status">
<div class="abs" style="left:0;top:0;width:27px;height:17px;background:#2479d6"></div>
<svg style="left:9.7px;top:2.6px" width="8" height="9.6" viewBox="0 0 8 9.6" fill="none" stroke="#fff" stroke-width="1"><path d="M.5 3.4 L3.6 6.3 L.5 9.2 M7.5 .4 L4.4 3.3 L7.5 6.2"/></svg>
<svg style="left:34px;top:2.5px" width="10.2" height="10.2" viewBox="0 0 10.2 10.2" fill="none" stroke="#ccc" stroke-width="1"><circle cx="5.1" cy="5.1" r="4.5"/><path d="M3.1 3.1 L7.1 7.1 M7.1 3.1 L3.1 7.1"/></svg>
<span class="sb" style="left:47.5px">0</span>
<svg style="left:56px;top:2.5px" width="10.2" height="10" viewBox="0 0 10.2 10" fill="none" stroke="#ccc" stroke-width="1" stroke-linejoin="round"><path d="M5.1 .7 L9.7 9.3 H.5 Z M5.1 3.6 V6.4 M5.1 7.2 V8.2"/></svg>
<span class="sb" style="left:68.8px">0</span>
<svg style="left:87.5px;top:2.5px" width="10.4" height="10.4" viewBox="0 0 10.4 10.4" fill="none" stroke="#ccc" stroke-width=".9" stroke-linecap="round"><path d="M5.2 3.6 L2.6 10 M5.2 3.6 L7.8 10 M3.6 7.6 H6.8 M3.3 1.2 Q2.2 3.2 3.3 5.2 M7.1 1.2 Q8.2 3.2 7.1 5.2 M1.5 .4 Q-.4 3.2 1.5 6.2 M8.9 .4 Q10.8 3.2 8.9 6.2"/><circle cx="5.2" cy="3.2" r=".7" fill="#ccc"/></svg>
<span class="sb" style="left:100.4px">0</span>
<svg style="left:118.4px;top:2.0px" width="11" height="11" viewBox="0 0 11 11" fill="none" stroke="#ccc" stroke-width="1" stroke-linejoin="round"><path d="M4.6 6 V.8 L10.4 4.8 L6.2 7.6"/><circle cx="3" cy="8" r="2.3"/><path d="M1.2 5.2 H3.2 V7"/></svg>
<span class="sb" style="left:133px;font-size:9.8px;letter-spacing:-.33px">Reload Twine Game</span>
<div class="abs" style="left:967.5px;top:0;width:27.3px;height:17px;background:#36393c"></div>
<svg style="left:975px;top:2.8px" width="11.4" height="11.4" viewBox="0 0 11.4 11.4" fill="none" stroke="#ccc" stroke-width="1"><circle cx="4.9" cy="4.9" r="4.1"/><path d="M7.8 7.8 L11 11 M4.9 3 V6.8 M3 4.9 H6.8"/></svg>
<svg style="left:1002px;top:2.9px" width="9.4" height="11.6" viewBox="0 0 9.4 11" fill="none" stroke="#ccc" stroke-width="1" stroke-linejoin="round"><path d="M.6 8.6 H8.8 L7.8 7 V4 Q7.8 .6 4.7 .6 Q1.6 .6 1.6 4 V7 Z M3.7 8.8 Q4.7 10.8 5.7 8.8"/></svg>
</div>
</body></html>
